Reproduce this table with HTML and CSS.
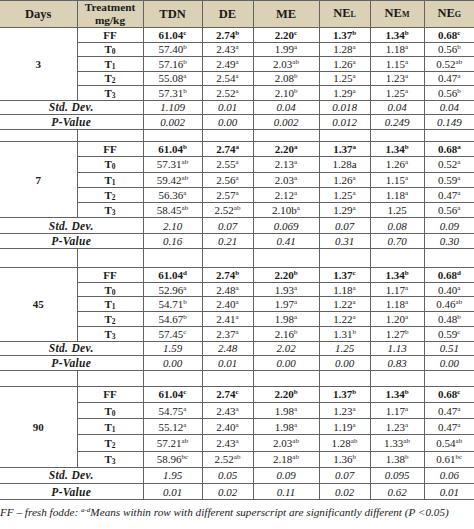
FILE: index.html
```html
<!DOCTYPE html>
<html>
<head>
<meta charset="utf-8">
<link rel="stylesheet" href="styles.css">
</head>
<body>
<table class="tbl">
<colgroup>
<col class="c-days"><col class="c-trt"><col class="c-tdn"><col class="c-de"><col class="c-me"><col class="c-nel"><col class="c-nem"><col class="c-neg">
</colgroup>
<thead>
<tr class="head">
<th class="first">Days</th><th class="trt-h"><span class="hl">Treatment</span><span class="hl">mg/kg</span></th><th>TDN</th><th>DE</th><th>ME</th><th>NE<span class="sc">L</span></th><th>NE<span class="sc">M</span></th><th>NE<span class="sc">G</span></th>
</tr>
</thead>
<tbody class="b1">
<tr class="ff"><td rowspan="5" class="first day">3</td><td class="trt">FF</td><td>61.04<sup>c</sup></td><td>2.74<sup>b</sup></td><td>2.20<sup>c</sup></td><td>1.37<sup>b</sup></td><td>1.34<sup>b</sup></td><td>0.68<sup>c</sup></td></tr>
<tr><td class="trt">T<sub>0</sub></td><td>57.40<sup>b</sup></td><td>2.43<sup>a</sup></td><td>1.99<sup>a</sup></td><td>1.28<sup>a</sup></td><td>1.18<sup>a</sup></td><td>0.56<sup>b</sup></td></tr>
<tr><td class="trt">T<sub>1</sub></td><td>57.16<sup>b</sup></td><td>2.49<sup>a</sup></td><td>2.03<sup>ab</sup></td><td>1.26<sup>a</sup></td><td>1.15<sup>a</sup></td><td>0.52<sup>ab</sup></td></tr>
<tr><td class="trt">T<sub>2</sub></td><td>55.08<sup>a</sup></td><td>2.54<sup>a</sup></td><td>2.08<sup>b</sup></td><td>1.25<sup>a</sup></td><td>1.23<sup>a</sup></td><td>0.47<sup>a</sup></td></tr>
<tr><td class="trt">T<sub>3</sub></td><td>57.31<sup>b</sup></td><td>2.52<sup>a</sup></td><td>2.10<sup>b</sup></td><td>1.29<sup>a</sup></td><td>1.25<sup>a</sup></td><td>0.56<sup>b</sup></td></tr>
<tr class="stat"><td colspan="2" class="first lbl">Std. Dev.</td><td>1.109</td><td>0.01</td><td>0.04</td><td>0.018</td><td>0.04</td><td>0.04</td></tr>
<tr class="stat"><td colspan="2" class="first lbl">P-Value</td><td>0.002</td><td>0.00</td><td>0.002</td><td>0.012</td><td>0.249</td><td>0.149</td></tr>
<tr class="gap g1"><td class="first"></td><td></td><td></td><td></td><td></td><td></td><td></td><td></td></tr>
</tbody>
<tbody class="b2">
<tr class="ff"><td rowspan="5" class="first day">7</td><td class="trt">FF</td><td>61.04<sup>b</sup></td><td>2.74<sup>a</sup></td><td>2.20<sup>a</sup></td><td>1.37<sup>a</sup></td><td>1.34<sup>b</sup></td><td>0.68<sup>a</sup></td></tr>
<tr><td class="trt">T<sub>0</sub></td><td>57.31<sup>ab</sup></td><td>2.55<sup>a</sup></td><td>2.13<sup>a</sup></td><td>1.28a</td><td>1.26<sup>a</sup></td><td>0.52<sup>a</sup></td></tr>
<tr><td class="trt">T<sub>1</sub></td><td>59.42<sup>ab</sup></td><td>2.56<sup>a</sup></td><td>2.03<sup>a</sup></td><td>1.26<sup>a</sup></td><td>1.15<sup>a</sup></td><td>0.59<sup>a</sup></td></tr>
<tr><td class="trt">T<sub>2</sub></td><td>56.36<sup>a</sup></td><td>2.57<sup>a</sup></td><td>2.12<sup>a</sup></td><td>1.25<sup>a</sup></td><td>1.18<sup>a</sup></td><td>0.47<sup>a</sup></td></tr>
<tr><td class="trt">T<sub>3</sub></td><td>58.45<sup>ab</sup></td><td>2.52<sup>ab</sup></td><td>2.10b<sup>a</sup></td><td>1.29<sup>a</sup></td><td>1.25</td><td>0.56<sup>a</sup></td></tr>
<tr class="stat"><td colspan="2" class="first lbl">Std. Dev.</td><td>2.10</td><td>0.07</td><td>0.069</td><td>0.07</td><td>0.08</td><td>0.09</td></tr>
<tr class="stat"><td colspan="2" class="first lbl">P-Value</td><td>0.16</td><td>0.21</td><td>0.41</td><td>0.31</td><td>0.70</td><td>0.30</td></tr>
<tr class="gap g2"><td class="first"></td><td></td><td></td><td></td><td></td><td></td><td></td><td></td></tr>
</tbody>
<tbody class="b3">
<tr class="ff"><td rowspan="5" class="first day">45</td><td class="trt">FF</td><td>61.04<sup>d</sup></td><td>2.74<sup>b</sup></td><td>2.20<sup>b</sup></td><td>1.37<sup>c</sup></td><td>1.34<sup>b</sup></td><td>0.68<sup>d</sup></td></tr>
<tr><td class="trt">T<sub>0</sub></td><td>52.96<sup>a</sup></td><td>2.48<sup>a</sup></td><td>1.93<sup>a</sup></td><td>1.18<sup>a</sup></td><td>1.17<sup>a</sup></td><td>0.40<sup>a</sup></td></tr>
<tr><td class="trt">T<sub>1</sub></td><td>54.71<sup>b</sup></td><td>2.40<sup>a</sup></td><td>1.97<sup>a</sup></td><td>1.22<sup>a</sup></td><td>1.18<sup>a</sup></td><td>0.46<sup>ab</sup></td></tr>
<tr><td class="trt">T<sub>2</sub></td><td>54.67<sup>b</sup></td><td>2.41<sup>a</sup></td><td>1.98<sup>a</sup></td><td>1.22<sup>a</sup></td><td>1.20<sup>a</sup></td><td>0.48<sup>b</sup></td></tr>
<tr><td class="trt">T<sub>3</sub></td><td>57.45<sup>c</sup></td><td>2.37<sup>a</sup></td><td>2.16<sup>b</sup></td><td>1.31<sup>b</sup></td><td>1.27<sup>b</sup></td><td>0.59<sup>c</sup></td></tr>
<tr class="stat"><td colspan="2" class="first lbl">Std. Dev.</td><td>1.59</td><td>2.48</td><td>2.02</td><td>1.25</td><td>1.13</td><td>0.51</td></tr>
<tr class="stat"><td colspan="2" class="first lbl">P-Value</td><td>0.00</td><td>0.01</td><td>0.00</td><td>0.00</td><td>0.83</td><td>0.00</td></tr>
<tr class="gap g3"><td class="first"></td><td></td><td></td><td></td><td></td><td></td><td></td><td></td></tr>
</tbody>
<tbody class="b4">
<tr class="ff"><td rowspan="5" class="first day">90</td><td class="trt">FF</td><td>61.04<sup>c</sup></td><td>2.74<sup>c</sup></td><td>2.20<sup>b</sup></td><td>1.37<sup>b</sup></td><td>1.34<sup>b</sup></td><td>0.68<sup>c</sup></td></tr>
<tr><td class="trt">T<sub>0</sub></td><td>54.75<sup>a</sup></td><td>2.43<sup>a</sup></td><td>1.98<sup>a</sup></td><td>1.23<sup>a</sup></td><td>1.17<sup>a</sup></td><td>0.47<sup>a</sup></td></tr>
<tr><td class="trt">T<sub>1</sub></td><td>55.12<sup>a</sup></td><td>2.40<sup>a</sup></td><td>1.98<sup>a</sup></td><td>1.19<sup>a</sup></td><td>1.23<sup>a</sup></td><td>0.47<sup>a</sup></td></tr>
<tr><td class="trt">T<sub>2</sub></td><td>57.21<sup>ab</sup></td><td>2.43<sup>a</sup></td><td>2.03<sup>ab</sup></td><td>1.28<sup>ab</sup></td><td>1.33<sup>ab</sup></td><td>0.54<sup>ab</sup></td></tr>
<tr><td class="trt">T<sub>3</sub></td><td>58.96<sup>bc</sup></td><td>2.52<sup>ab</sup></td><td>2.18<sup>ab</sup></td><td>1.36<sup>b</sup></td><td>1.38<sup>b</sup></td><td>0.61<sup>bc</sup></td></tr>
<tr class="stat"><td colspan="2" class="first lbl">Std. Dev.</td><td>1.95</td><td>0.05</td><td>0.09</td><td>0.07</td><td>0.095</td><td>0.06</td></tr>
<tr class="stat"><td colspan="2" class="first lbl">P-Value</td><td>0.01</td><td>0.02</td><td>0.11</td><td>0.02</td><td>0.62</td><td>0.01</td></tr>
</tbody>
</table>
<p class="note">FF – fresh fodde: <sup>a-d</sup>Means within row with different superscript are significantly different (P &lt;0.05)</p>
</body>
</html>
```

FILE: styles.css
```css
html, body {
  margin: 0;
  padding: 0;
  background: #ffffff;
  overflow: hidden;
}
body {
  width: 474px;
  height: 529px;
  font-family: "Liberation Serif", "Times New Roman", serif;
  color: #1a1a1a;
}
.tbl {
  border-collapse: collapse;
  table-layout: fixed;
  width: 474px;
}
.c-days { width: 77px; }
.c-trt { width: 66px; }
.c-tdn { width: 59px; }
.c-de { width: 51px; }
.c-me { width: 66px; }
.c-nel { width: 51px; }
.c-nem { width: 54px; }
.c-neg { width: 50px; }

.tbl th, .tbl td {
  border: 1px solid #626262;
  padding: 0;
  text-align: center;
  vertical-align: middle;
  font-size: 11px;
  line-height: 12px;
  white-space: nowrap;
  overflow: hidden;
}
.tbl .first { border-left: none; }
.tbl tr > :last-child { border-right: none; }

.head th {
  background: #dbd1b6;
  font-weight: bold;
  font-size: 12.5px;
  line-height: 12px;
  height: 25px;
}
.head .trt-h {
  font-size: 11.3px;
}
.hl {
  display: block;
  line-height: 13px;
  height: 13px;
}
.sc {
  font-size: 8px;
}
.tbl sup {
  font-size: 7px;
  line-height: 0;
  vertical-align: 4px;
}
.tbl sub {
  font-size: 7.5px;
  line-height: 0;
  vertical-align: -1px;
}
.ff td { font-weight: bold; }
.trt { font-weight: bold; }
.day { font-weight: bold; font-size: 12px; }
.stat td { font-style: italic; }
.stat .lbl { font-weight: bold; font-size: 11.5px; letter-spacing: 0.3px; }

.b1 tr { height: 14.5px; }
.b2 tr { height: 15.3px; }
.b3 tr { height: 14.7px; }
.b4 tr { height: 16.2px; }
.g1 { height: 12.5px !important; }
.g2 { height: 19px !important; }
.g3 { height: 16px !important; }

.note {
  margin: 6px 0 0 0;
  font-style: italic;
  font-size: 11.2px;
  line-height: 13px;
  white-space: nowrap;
}
.note sup {
  font-size: 7px;
  vertical-align: 4px;
  line-height: 0;
}
```
